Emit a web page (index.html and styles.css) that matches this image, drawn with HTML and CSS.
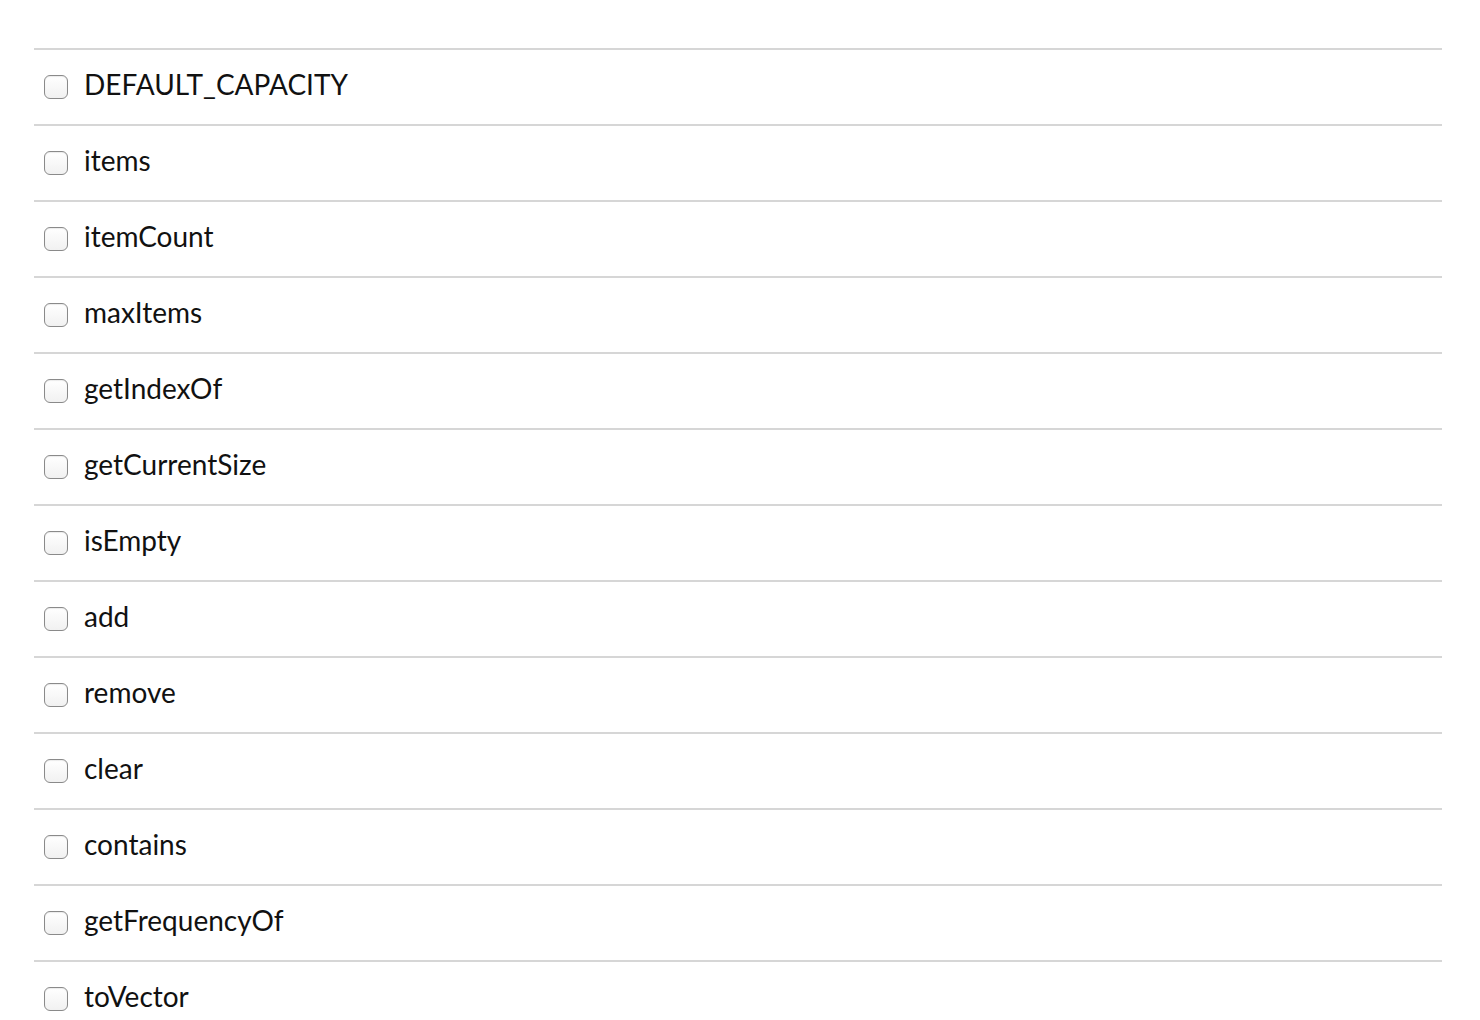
FILE: index.html
```html
<!DOCTYPE html>
<html>
<head>
<meta charset="utf-8">
<link rel="stylesheet" href="styles.css">
</head>
<body>
<ul class="list">
  <li class="row"><span class="box"></span><span class="label">DEFAULT_CAPACITY</span></li>
  <li class="row"><span class="box"></span><span class="label">items</span></li>
  <li class="row"><span class="box"></span><span class="label">itemCount</span></li>
  <li class="row"><span class="box"></span><span class="label">maxItems</span></li>
  <li class="row"><span class="box"></span><span class="label">getIndexOf</span></li>
  <li class="row"><span class="box"></span><span class="label">getCurrentSize</span></li>
  <li class="row"><span class="box"></span><span class="label">isEmpty</span></li>
  <li class="row"><span class="box"></span><span class="label">add</span></li>
  <li class="row"><span class="box"></span><span class="label">remove</span></li>
  <li class="row"><span class="box"></span><span class="label">clear</span></li>
  <li class="row"><span class="box"></span><span class="label">contains</span></li>
  <li class="row"><span class="box"></span><span class="label">getFrequencyOf</span></li>
  <li class="row"><span class="box"></span><span class="label">toVector</span></li>
</ul>
</body>
</html>
```
FILE: styles.css
```css
html, body {
  margin: 0;
  padding: 0;
  background: #ffffff;
}
body {
  padding: 48px 38px 0 34px;
  font-family: Lato, "Liberation Sans", sans-serif;
  color: #111111;
}
.list {
  list-style: none;
  margin: 0;
  padding: 0;
}
.row {
  display: flex;
  align-items: center;
  gap: 16px;
  height: 74px;
  padding-left: 10px;
  border-top: 2px solid #d6d6d6;
}
.box {
  box-sizing: border-box;
  width: 24px;
  height: 24px;
  border: 1px solid #8a8a8a;
  border-radius: 6px;
  background: linear-gradient(#ffffff, #f1f1f1);
  box-shadow: inset 0 1px 1px rgba(0,0,0,0.08);
  flex: none;
}
.label {
  font-size: 28px;
  line-height: 1;
  position: relative;
  top: -3px;
}
```
